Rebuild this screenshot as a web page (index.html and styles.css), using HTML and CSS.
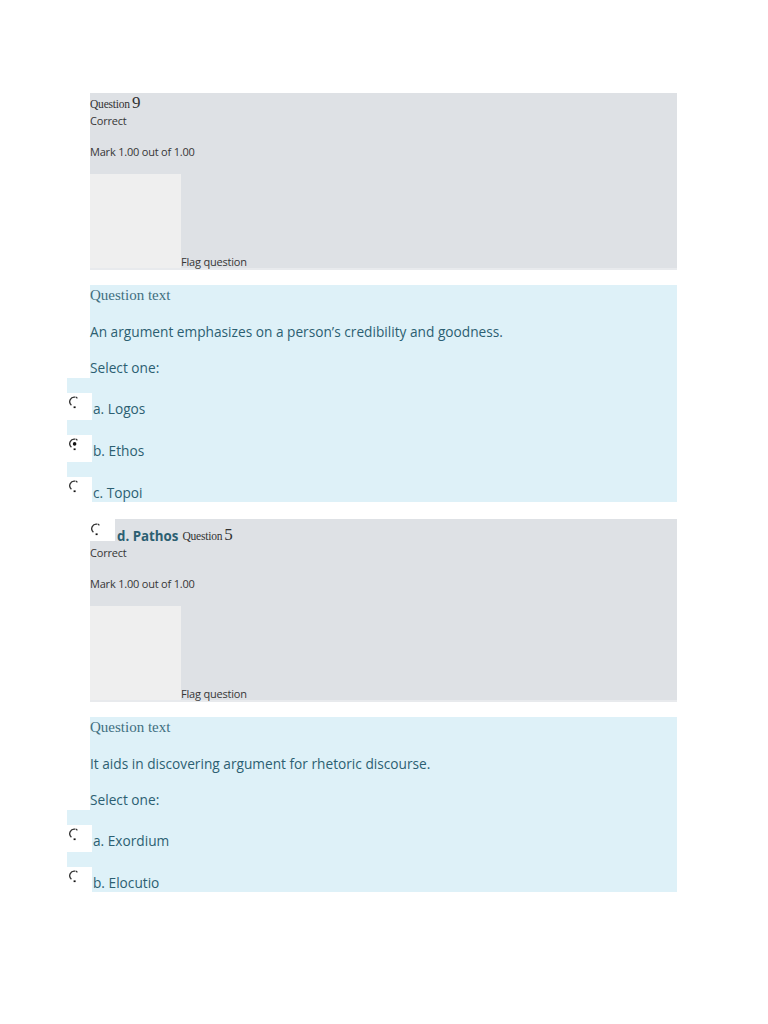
FILE: index.html
```html
<!DOCTYPE html>
<html>
<head>
<meta charset="utf-8">
<link rel="stylesheet" href="styles.css">
</head>
<body>
<div class="page">
  <section class="info">
    <div class="qno"><span class="ql">Question</span><span class="qn">9</span></div>
    <div class="state">Correct</div>
    <div class="grade">Mark 1.00 out of 1.00</div>
    <div class="flag"><div class="ph"></div><span class="flag-label">Flag question</span></div>
  </section>

  <section class="content">
    <div class="qtext">
      <div class="qtitle">Question text</div>
      <p class="prompt">An argument emphasizes on a person’s credibility and goodness.</p>
      <p class="select">Select one:</p>
    </div>
    <div class="answers three">
      <div class="opt">
        <span class="radio"><svg width="11" height="14" viewBox="0 0 11 14"><path d="M6.4 2.2 A4.6 4.6 0 0 0 2.4 10.2" fill="none" stroke="#333" stroke-width="1.3"/><path d="M7 2 L8.4 3.4" stroke="#333" stroke-width="1.2"/><rect x="4.6" y="11.4" width="2" height="1.7" fill="#111"/></svg></span>
        <span class="label">a. Logos</span>
      </div>
      <div class="opt">
        <span class="radio"><svg width="11" height="14" viewBox="0 0 11 14"><path d="M6.4 2.2 A4.6 4.6 0 0 0 2.4 10.2" fill="none" stroke="#333" stroke-width="1.3"/><path d="M7 2 L8.4 3.4" stroke="#333" stroke-width="1.2"/><rect x="4.6" y="11.4" width="2" height="1.7" fill="#111"/><circle cx="5.6" cy="6.9" r="1.8" fill="#111"/></svg></span>
        <span class="label">b. Ethos</span>
      </div>
      <div class="opt">
        <span class="radio"><svg width="11" height="14" viewBox="0 0 11 14"><path d="M6.4 2.2 A4.6 4.6 0 0 0 2.4 10.2" fill="none" stroke="#333" stroke-width="1.3"/><path d="M7 2 L8.4 3.4" stroke="#333" stroke-width="1.2"/><rect x="4.6" y="11.4" width="2" height="1.7" fill="#111"/></svg></span>
        <span class="label">c. Topoi</span>
      </div>
    </div>
  </section>

  <section class="info info-second">
    <div class="qno qno-opt">
      <span class="radio radio-d"><svg width="11" height="14" viewBox="0 0 11 14"><path d="M6.4 2.2 A4.6 4.6 0 0 0 2.4 10.2" fill="none" stroke="#333" stroke-width="1.3"/><path d="M7 2 L8.4 3.4" stroke="#333" stroke-width="1.2"/><rect x="4.6" y="11.4" width="2" height="1.7" fill="#111"/></svg></span>
      <span class="dlabel">d. Pathos</span><span class="ql">Question</span><span class="qn">5</span>
    </div>
    <div class="state">Correct</div>
    <div class="grade">Mark 1.00 out of 1.00</div>
    <div class="flag"><div class="ph"></div><span class="flag-label">Flag question</span></div>
  </section>

  <section class="content">
    <div class="qtext">
      <div class="qtitle">Question text</div>
      <p class="prompt">It aids in discovering argument for rhetoric discourse.</p>
      <p class="select">Select one:</p>
    </div>
    <div class="answers two">
      <div class="opt">
        <span class="radio"><svg width="11" height="14" viewBox="0 0 11 14"><path d="M6.4 2.2 A4.6 4.6 0 0 0 2.4 10.2" fill="none" stroke="#333" stroke-width="1.3"/><path d="M7 2 L8.4 3.4" stroke="#333" stroke-width="1.2"/><rect x="4.6" y="11.4" width="2" height="1.7" fill="#111"/></svg></span>
        <span class="label">a. Exordium</span>
      </div>
      <div class="opt">
        <span class="radio"><svg width="11" height="14" viewBox="0 0 11 14"><path d="M6.4 2.2 A4.6 4.6 0 0 0 2.4 10.2" fill="none" stroke="#333" stroke-width="1.3"/><path d="M7 2 L8.4 3.4" stroke="#333" stroke-width="1.2"/><rect x="4.6" y="11.4" width="2" height="1.7" fill="#111"/></svg></span>
        <span class="label">b. Elocutio</span>
      </div>
    </div>
  </section>
</div>
</body>
</html>
```

FILE: styles.css
```css
* { box-sizing: border-box; }
html, body { margin: 0; padding: 0; background: #ffffff; }
body { font-family: "Open Sans", "Liberation Sans", sans-serif; }

.page {
  padding-top: 93px;
  margin-left: 67px;
  width: 610px;
}

.info {
  margin-left: 23px;
  background: #dee1e5;
  border-bottom: 2px solid #e8eaed;
  color: #363636;
}

.qno {
  height: 19px;
  line-height: 19px;
  white-space: nowrap;
}
.ql {
  font-family: "Liberation Serif", serif;
  font-size: 11.5px;
  color: #333;
  letter-spacing: -0.2px;
}
.qn {
  font-family: "Liberation Serif", serif;
  font-size: 17px;
  color: #333;
  margin-left: 2px;
}

.state, .grade, .flag-label {
  font-size: 11px;
  line-height: 18px;
  letter-spacing: -0.2px;
}
.grade { margin-top: 13px; }

.flag {
  margin-top: 13px;
  display: flex;
  align-items: flex-end;
}
.ph {
  width: 91px;
  height: 94px;
  background: #efefef;
}
.flag-label { line-height: 13px; }

.content { margin-top: 15px; }
.qtext {
  margin-left: 23px;
  background: #def1f8;
  height: 93px;
}
.qtitle {
  font-family: "Liberation Serif", serif;
  font-size: 15px;
  line-height: 20px;
  color: #3e6f80;
}
.prompt, .select {
  margin: 0;
  font-size: 13.7px;
  line-height: 20px;
  color: #2c5f72;
}
.prompt { padding-top: 17px; }
.select { padding-top: 16px; height: 36px; }

.answers {
  background: #def1f8;
  padding-top: 15px;
  display: flex;
  flex-direction: column;
  gap: 15px;
  overflow: hidden;
}
.answers.three { height: 124px; }
.answers.two { height: 82px; }

.opt {
  display: flex;
  align-items: flex-start;
  height: 27px;
  flex: none;
}
.radio {
  width: 25px;
  height: 27px;
  background: #ffffff;
  padding: 2px 0 0 2px;
  flex: none;
  display: block;
}
.radio svg { display: block; }
.label {
  margin-left: 1px;
  padding-top: 5px;
  font-size: 13.7px;
  line-height: 22px;
  color: #2c5f72;
}

.info-second { margin-top: 17px; }
.qno-opt {
  height: 25px;
  display: flex;
  align-items: flex-start;
}
.radio-d {
  height: 22px;
  padding: 3px 0 0 1px;
}
.dlabel {
  margin-left: 2px;
  padding-top: 9px;
  font-size: 13.3px;
  font-weight: bold;
  color: #2c5f72;
  line-height: 16px;
  margin-right: 4px;
}
.qno-opt .ql { padding-top: 9px; line-height: 16px; }
.qno-opt .qn { padding-top: 8px; line-height: 16px; }
```
